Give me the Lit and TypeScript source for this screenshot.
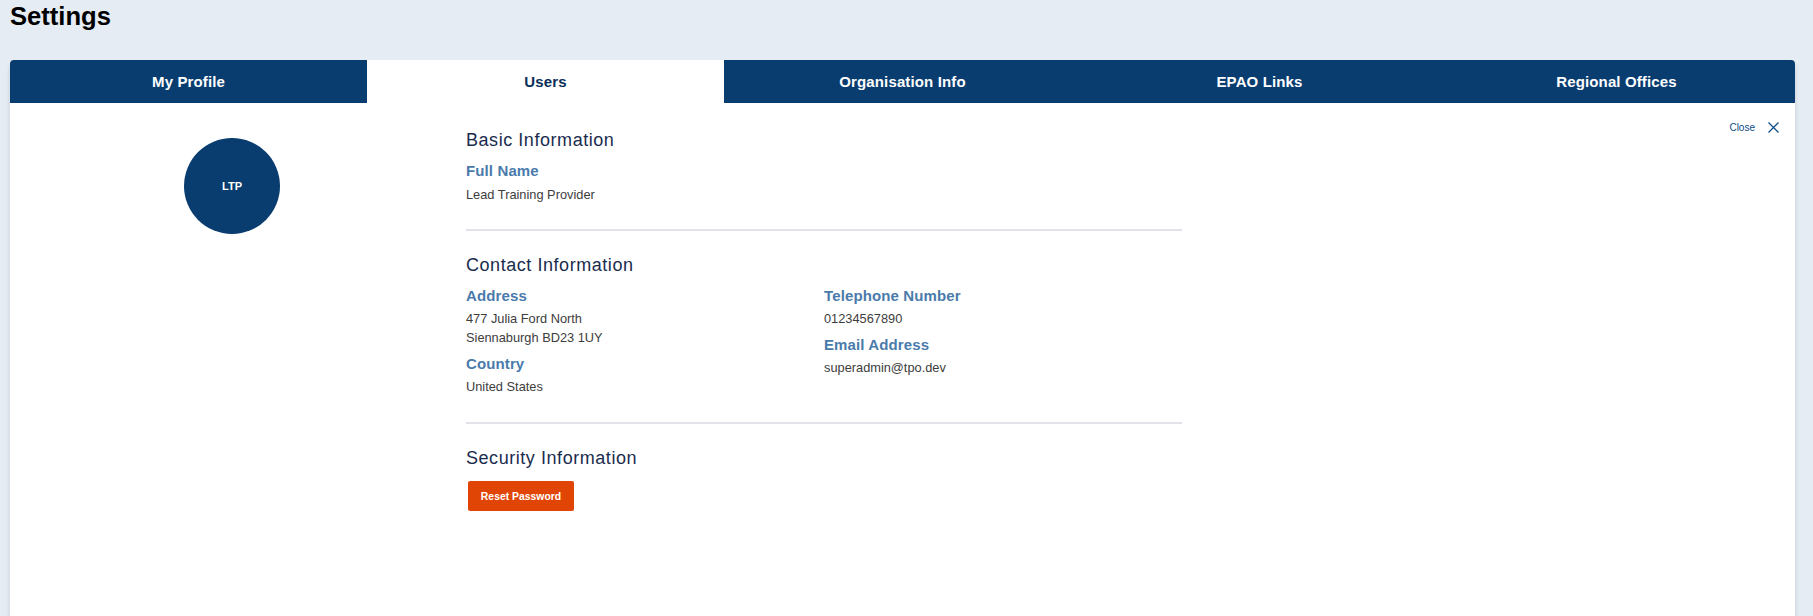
import { LitElement, html, css } from "lit";
import { customElement } from "lit/decorators.js";

@customElement("app-root")
export class AppRoot extends LitElement {
  static styles = css`
    :host { display: block; height: 616px; overflow: hidden; background: #e5ecf4; font-family: "Liberation Sans", Arial, sans-serif; color: #333; }
    .title { margin: 0; padding: 0 0 0 10px; height: 60px; font-size: 25.6px; line-height: 32px; font-weight: 700; color: #000; }
    .card { margin: 0 18px 0 10px; height: 556px; background: #fff; box-shadow: 0 5px 5px rgba(0,0,0,.14); border-radius: 4px 4px 0 0; display: flex; flex-direction: column; }
    .tabs { display: grid; grid-template-columns: repeat(5, 1fr); height: 43px; background: #093d70; border-radius: 4px 4px 0 0; overflow: hidden; }
    .tab { display: flex; align-items: center; justify-content: center; color: #fff; font-size: 15px; font-weight: 700; letter-spacing: .13px; }
    .tab.active { background: #fff; color: #0b2f57; }
    .body { position: relative; flex: 1; display: flex; }
    .left { width: 444px; flex: none; display: flex; justify-content: center; padding-top: 35px; }
    .avatar { width: 96px; height: 96px; border-radius: 50%; background: #093d70; color: #fff; display: flex; align-items: center; justify-content: center; font-size: 11px; font-weight: 700; }
    .main { width: 716px; margin-left: 12px; padding-top: 27px; }
    h2 { margin: 0; font-size: 18px; line-height: 20px; font-weight: 400; color: #1a2c4e; letter-spacing: .55px; }
    .label { font-size: 15px; line-height: 18px; font-weight: 700; color: #4a7bab; letter-spacing: .12px; }
    .value { font-size: 12.8px; line-height: 20px; color: #3d3d3d; }
    .addr { line-height: 19px; }
    hr { border: 0; height: 2px; background: #e3e4ea; margin: 0; }
    .cols { display: grid; grid-template-columns: 358px 358px; }
    .close { position: absolute; top: 17px; right: 16px; display: flex; align-items: center; gap: 13px; font-size: 10px; line-height: 12px; color: #0a4a85; }
    .close span { padding-top: 2px; }
    .btn { margin: 13px 0 0 2px; border: 0; width: 106px; height: 30px; background: #e04506; color: #fff; font-size: 10.4px; font-weight: 700; border-radius: 2px; font-family: inherit; padding: 0; display: block; }
    .s1 { height: 99px; }
    .s1 .val { margin-top: 5px; }
    .s2 { padding-top: 24px; height: 167px; }
    .s3 { padding-top: 24px; }
    .mt { margin-top: 12px; }
    .val { margin-top: 4px; }
    .next { margin-top: 6px; }
    .next.far { margin-top: 7px; }
    .next.farther { margin-top: 8px; }
  `;
  render() {
    return html`
      <h1 class="title">Settings</h1>
      <div class="card">
        <div class="tabs">
          ${["My Profile", "Users", "Organisation Info", "EPAO Links", "Regional Offices"].map(
            (t) => html`<div class="tab ${t === "Users" ? "active" : ""}">${t}</div>`
          )}
        </div>
        <div class="body">
          <div class="left"><div class="avatar">LTP</div></div>
          <div class="main">
            <div class="s1">
              <h2>Basic Information</h2>
              <div class="label mt">Full Name</div>
              <div class="value val">Lead Training Provider</div>
            </div>
            <hr />
            <div class="s2">
              <h2>Contact Information</h2>
              <div class="cols">
                <div>
                  <div class="label mt">Address</div>
                  <div class="value addr val">477 Julia Ford North<br />Siennaburgh BD23 1UY</div>
                  <div class="label next farther">Country</div>
                  <div class="value val">United States</div>
                </div>
                <div>
                  <div class="label mt">Telephone Number</div>
                  <div class="value val">01234567890</div>
                  <div class="label next far">Email Address</div>
                  <div class="value val">superadmin@tpo.dev</div>
                </div>
              </div>
            </div>
            <hr />
            <div class="s3">
              <h2>Security Information</h2>
              <button class="btn">Reset Password</button>
            </div>
          </div>
          <div class="close">
            <span>Close</span>
            <svg width="11" height="11" viewBox="0 0 11 11"><path d="M.5.5l10 10M10.5.5l-10 10" stroke="#0a4a85" stroke-width="1.2" fill="none" /></svg>
          </div>
        </div>
      </div>
    `;
  }
}
